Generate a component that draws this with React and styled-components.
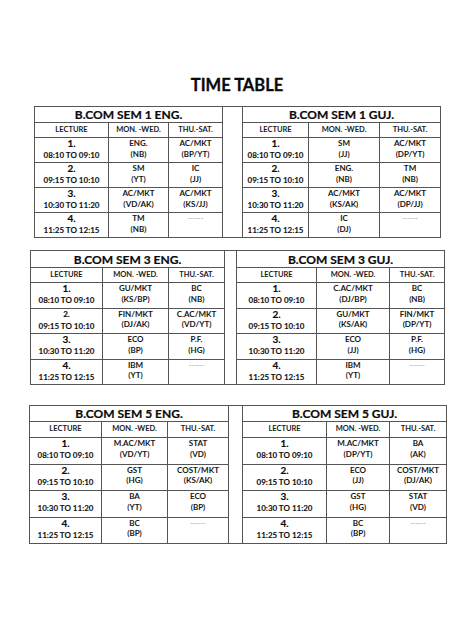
import React from 'react'
import styled, { createGlobalStyle } from 'styled-components';

const GlobalStyle = createGlobalStyle`
  body {
    margin: 0;
    background: #ffffff;
    font-family: Lato, "Open Sans", "Liberation Sans", sans-serif;
    color: #111;
  }
`;

const blocks = [
  {
    ml: 34, mt: 11, headH: 16, subH: 15, rowH: 25,
    left: [74, 60, 54], gap: 20, right: [66, 71, 61],
    tables: [
      {
        name: 'B.COM SEM 1 ENG.',
        rows: [
          [['ENG.', '(NB)'], ['AC/MKT', '(BP/YT)']],
          [['SM', '(YT)'], ['IC', '(JJ)']],
          [['AC/MKT', '(VD/AK)'], ['AC/MKT', '(KS/JJ)']],
          [['TM', '(NB)'], null],
        ],
      },
      {
        name: 'B.COM SEM 1 GUJ.',
        rows: [
          [['SM', '(JJ)'], ['AC/MKT', '(DP/YT)']],
          [['ENG.', '(NB)'], ['TM', '(NB)']],
          [['AC/MKT', '(KS/AK)'], ['AC/MKT', '(DP/JJ)']],
          [['IC', '(DJ)'], null],
        ],
      },
    ],
  },
  {
    ml: 30, mt: 12, headH: 17, subH: 15, rowH: 25.5,
    left: [72, 66, 56], gap: 12, right: [80, 73, 55],
    tables: [
      {
        name: 'B.COM SEM 3 ENG.',
        small: [1],
        rows: [
          [['GU/MKT', '(KS/BP)'], ['BC', '(NB)']],
          [['FIN/MKT', '(DJ/AK)'], ['C.AC/MKT', '(VD/YT)']],
          [['ECO', '(BP)'], ['P.F.', '(HG)']],
          [['IBM', '(YT)'], null],
        ],
      },
      {
        name: 'B.COM SEM 3 GUJ.',
        rows: [
          [['C.AC/MKT', '(DJ/BP)'], ['BC', '(NB)']],
          [['GU/MKT', '(KS/AK)'], ['FIN/MKT', '(DP/YT)']],
          [['ECO', '(JJ)'], ['P.F.', '(HG)']],
          [['IBM', '(YT)'], null],
        ],
      },
    ],
  },
  {
    ml: 29, mt: 20, headH: 16, subH: 16, rowH: 26.5,
    left: [72, 66, 61], gap: 14, right: [84, 63, 57],
    tables: [
      {
        name: 'B.COM SEM 5 ENG.',
        rows: [
          [['M.AC/MKT', '(VD/YT)'], ['STAT', '(VD)']],
          [['GST', '(HG)'], ['COST/MKT', '(KS/AK)']],
          [['BA', '(YT)'], ['ECO', '(BP)']],
          [['BC', '(BP)'], null],
        ],
      },
      {
        name: 'B.COM SEM 5 GUJ.',
        rows: [
          [['M.AC/MKT', '(DP/YT)'], ['BA', '(AK)']],
          [['ECO', '(JJ)'], ['COST/MKT', '(DJ/AK)']],
          [['GST', '(HG)'], ['STAT', '(VD)']],
          [['BC', '(BP)'], null],
        ],
      },
    ],
  },
];

const times = ['08:10 TO 09:10', '09:15 TO 10:10', '10:30 TO 11:20', '11:25 TO 12:15'];

const Cells = ({ rowIndex, table }) => {
  const [mon, thu] = table.rows[rowIndex];
  const small = table.small && table.small.includes(rowIndex);
  return (
    <>
      <Cell>
        <Num $small={small}>{rowIndex + 1}.</Num>
        <Time>{times[rowIndex]}</Time>
      </Cell>
      <Cell>
        <Subject>{mon[0]}</Subject>
        <Subject>{mon[1]}</Subject>
      </Cell>
      <Cell>
        {thu ? (
          <>
            <Subject>{thu[0]}</Subject>
            <Subject>{thu[1]}</Subject>
          </>
        ) : (
          <Dash>------</Dash>
        )}
      </Cell>
    </>
  );
};

const Block = ({ block }) => {
  const [l, r] = block.tables;
  const total = [...block.left, block.gap, ...block.right].reduce((a, b) => a + b, 0);
  return (
    <Table $ml={block.ml} $mt={block.mt} $w={total}>
      <colgroup>
        {block.left.map((w, i) => <Col key={'l' + i} $w={w} />)}
        <Col $w={block.gap} />
        {block.right.map((w, i) => <Col key={'r' + i} $w={w} />)}
      </colgroup>
      <tbody>
        <Row $h={block.headH}>
          <Head colSpan={3}>{l.name}</Head>
          <Gap rowSpan={6} />
          <Head colSpan={3}>{r.name}</Head>
        </Row>
        <Row $h={block.subH}>
          <Sub>LECTURE</Sub>
          <Sub>MON. -WED.</Sub>
          <Sub>THU.-SAT.</Sub>
          <Sub>LECTURE</Sub>
          <Sub>MON. -WED.</Sub>
          <Sub>THU.-SAT.</Sub>
        </Row>
        {[0, 1, 2, 3].map((i) => (
          <Row key={i} $h={block.rowH}>
            <Cells rowIndex={i} table={l} />
            <Cells rowIndex={i} table={r} />
          </Row>
        ))}
      </tbody>
    </Table>
  );
};

const App = () => {
  return (
    <Page>
      <GlobalStyle />
      <Title>TIME TABLE</Title>
      {blocks.map((b, i) => <Block key={i} block={b} />)}
    </Page>
  );
};

const Page = styled.div`
  width: 474px;
  height: 632px;
  padding-top: 75px;
  box-sizing: border-box;
  display: flex;
  flex-direction: column;
  align-items: flex-start;
`;

const Title = styled.div`
  align-self: stretch;
  text-align: center;
  font-size: 16.5px;
  line-height: 20px;
  font-weight: 700;
  color: #0a0a0a;
  -webkit-text-stroke: 0.3px #0a0a0a;
`;

const Table = styled.table`
  margin-left: ${(p) => p.$ml}px;
  margin-top: ${(p) => p.$mt}px;
  width: ${(p) => p.$w}px;
  table-layout: fixed;
  border-collapse: collapse;
  border: 1px solid #555;
`;

const Col = styled.col`
  width: ${(p) => p.$w}px;
`;

const Row = styled.tr`
  height: ${(p) => p.$h}px;
`;

const Head = styled.td`
  border: 1px solid #555;
  padding: 0;
  text-align: center;
  vertical-align: middle;
  font-size: 12px;
  line-height: 13px;
  font-weight: 700;
  color: #0a0a0a;
  -webkit-text-stroke: 0.2px #0a0a0a;
  white-space: nowrap;
`;

const Gap = styled.td`
  border-left: 1px solid #555;
  border-right: 1px solid #555;
  padding: 0;
`;

const Sub = styled.td`
  border: 1px solid #555;
  padding: 0 0 1px;
  text-align: center;
  vertical-align: middle;
  font-size: 7.5px;
  line-height: 10px;
  font-weight: 700;
  color: #1a1a1a;
  white-space: nowrap;
`;

const Cell = styled.td`
  border: 1px solid #555;
  padding: 0;
  text-align: center;
  vertical-align: top;
  white-space: nowrap;
  overflow: hidden;
`;

const Num = styled.div`
  font-size: ${(p) => (p.$small ? 8 : 10)}px;
  line-height: 11px;
  font-weight: 700;
  color: #0a0a0a;
  -webkit-text-stroke: 0.15px #0a0a0a;
`;

const Time = styled.div`
  font-size: 8px;
  line-height: 12px;
  font-weight: 700;
  color: #111;
  -webkit-text-stroke: 0.1px #111;
`;

const Subject = styled.div`
  font-size: 8px;
  line-height: 10.5px;
  font-weight: 700;
  color: #151515;
`;

const Dash = styled.div`
  font-size: 7px;
  line-height: 10px;
  font-weight: 400;
  color: #999;
`;

export default App
